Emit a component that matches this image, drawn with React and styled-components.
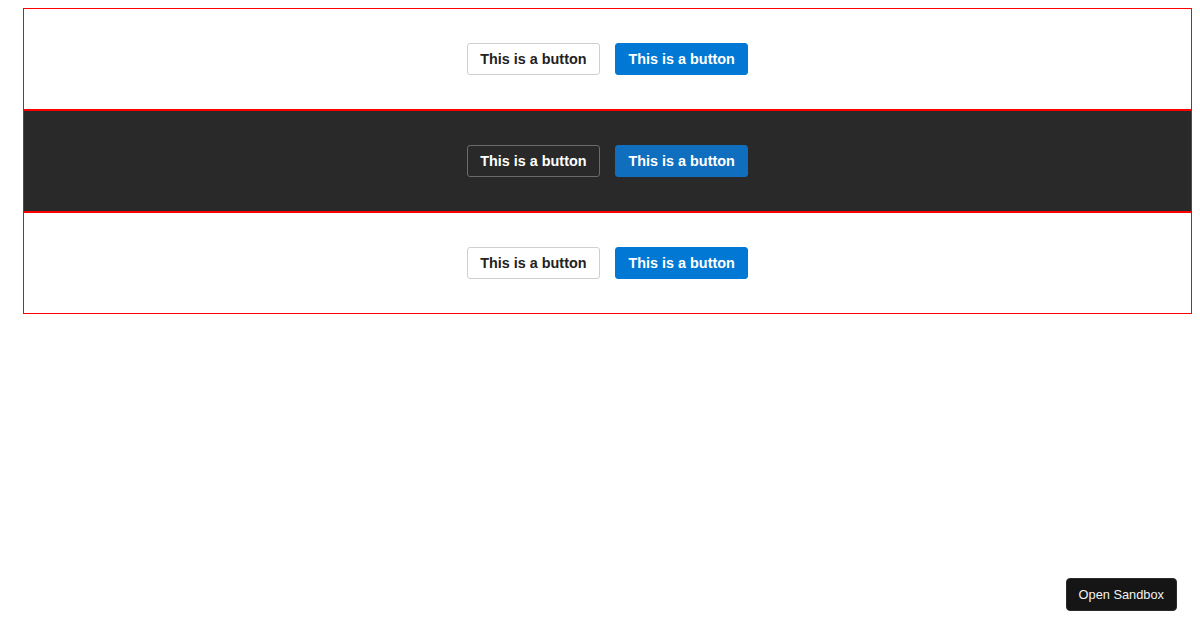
import React from "react";
import styled, { createGlobalStyle } from "styled-components";

const Global = createGlobalStyle`
  html, body { margin: 0; padding: 0; background: #fff; }
  body { padding: 8px 8px 8px 23px; font-family: "Liberation Sans", Arial, sans-serif; }
`;

const Stack = styled.div`
  display: flex;
  flex-direction: column;
`;

const Section = styled.div`
  height: 100px;
  border: 1px solid #ff0000;
  background: ${(p) => (p.$dark ? "#292929" : "#ffffff")};
  display: flex;
  align-items: center;
  justify-content: center;
  gap: 15px;
`;

const Button = styled.button`
  height: 32px;
  padding: 0 12.5px;
  border-radius: 3px;
  font-family: "Liberation Sans", Arial, sans-serif;
  font-weight: 700;
  font-size: 14.4px;
  cursor: pointer;
  border: 1px solid ${(p) => (p.$primary ? p.$blue : p.$dark ? "#6b6b6b" : "#cfcfcf")};
  background: ${(p) => (p.$primary ? p.$blue : "transparent")};
  color: ${(p) => (p.$primary ? "#ffffff" : p.$dark ? "#ffffff" : "#222222")};
`;

const Sandbox = styled.button`
  position: fixed;
  right: 23px;
  bottom: 19px;
  height: 33px;
  padding: 0 12px;
  background: #151515;
  color: #f2f2f2;
  border: 1px solid #2a2a2a;
  border-radius: 4px;
  font-family: "Liberation Sans", Arial, sans-serif;
  font-size: 12.8px;
`;

const rows = [
  { dark: false, blue: "#0078d4" },
  { dark: true, blue: "#106ebe" },
  { dark: false, blue: "#0078d4" },
];

export default function App() {
  return (
    <>
      <Global />
      <Stack>
        {rows.map((r, i) => (
          <Section key={i} $dark={r.dark}>
            <Button $dark={r.dark}>This is a button</Button>
            <Button $primary $blue={r.blue}>This is a button</Button>
          </Section>
        ))}
      </Stack>
      <Sandbox>Open Sandbox</Sandbox>
    </>
  );
}
